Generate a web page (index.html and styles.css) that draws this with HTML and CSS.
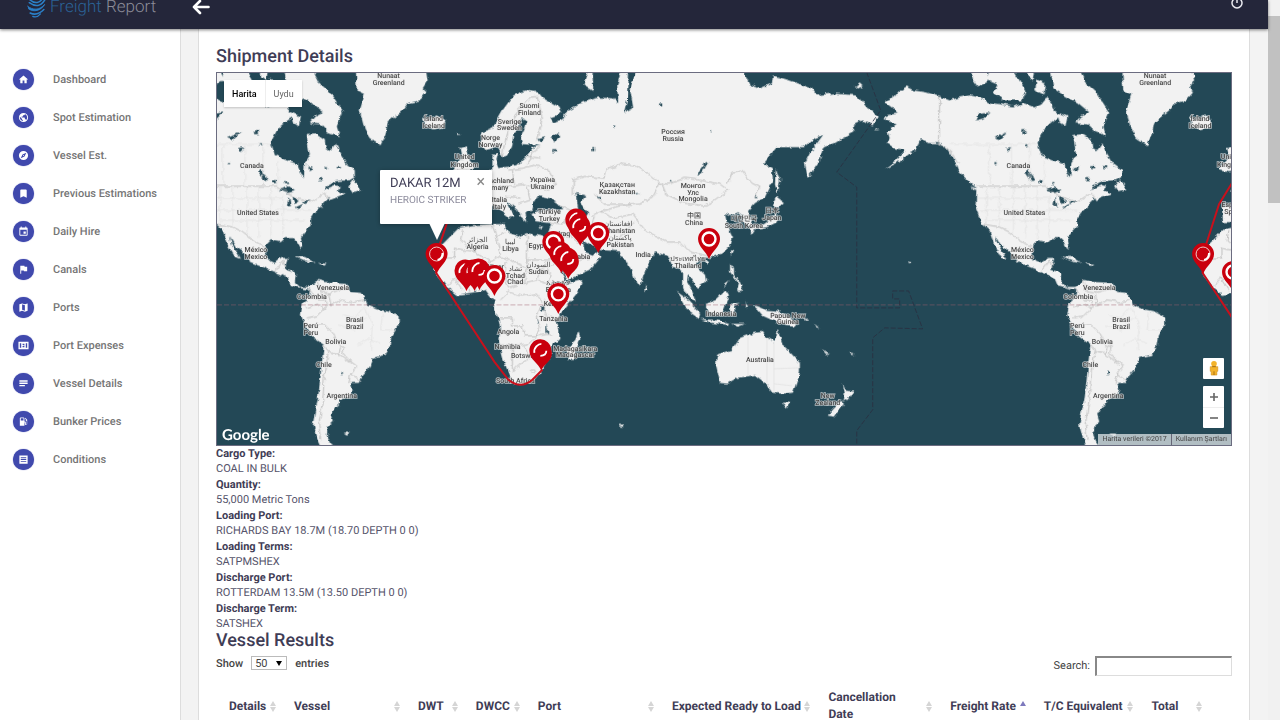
FILE: index.html
```html
<!DOCTYPE html>
<html lang="en">
<head>
<meta charset="utf-8">
<meta name="viewport" content="width=device-width, initial-scale=1">
<title>Freight Report</title>
<link rel="stylesheet" href="styles.css">
</head>
<body>
<div class="app">
<div class="page">
<header class="topbar">
  <a class="brand" href="#">
    <svg class="brand-mark" viewBox="0 0 24 28" fill="none" stroke="#2b80c8" stroke-linecap="round"><path d="M3 5Q13 14 20 2M3 9Q14 17 21 6" stroke-width="1.800"/><path d="M1 13C7 18 15 18 21 11C17 18 8 21 2 16" stroke-width="1" fill="#2b80c8"/><path d="M4 21Q12 25 20 17" stroke-width="1.800"/><path d="M7 25Q12 27 16 22" stroke-width="1.400"/></svg>
    <span><span class="brand-a">Freight</span> <span class="brand-b">Report</span></span>
  </a>
  <button class="icon-btn back" aria-label="Back"><svg viewBox="0 0 18 16" fill="none" stroke="#fff" stroke-width="2.600" stroke-linecap="round" stroke-linejoin="round"><path d="M16.500 8H2M8 2L2 8l6 6"/></svg></button>
  <button class="icon-btn power" aria-label="Log out"><svg viewBox="0 0 14 14" fill="none" stroke="#e8e8ee" stroke-width="1.500"><path d="M7 1v6M4 3a5 5 0 1 0 6 0"/></svg></button>
</header>
<div class="body">
<nav class="side">
  <a href="#"><i><svg viewBox="0 0 24 24"><path d="M10 20v-6h4v6h5v-8h3L12 3 2 12h3v8z"/></svg></i>Dashboard</a>
  <a href="#"><i><svg viewBox="0 0 24 24"><path d="M12 2a10 10 0 1 0 0 20 10 10 0 0 0 0-20zm-1 17.900A8 8 0 0 1 4.200 10.200L9 15v1a2 2 0 0 0 2 2zm6.900-2.500A2 2 0 0 0 16 16h-1v-3a1 1 0 0 0-1-1H8v-2h2a1 1 0 0 0 1-1V7h2a2 2 0 0 0 2-2v-.4a8 8 0 0 1 2.900 12.800z"/></svg></i>Spot Estimation</a>
  <a href="#"><i><svg viewBox="0 0 24 24"><path fill-rule="evenodd" d="M12 2a10 10 0 1 0 0 20 10 10 0 0 0 0-20zm2.200 12.200L6 18l3.800-8.200L18 6zM12 10.900a1.100 1.100 0 1 0 0 2.200 1.100 1.100 0 0 0 0-2.200z"/></svg></i>Vessel Est.</a>
  <a href="#"><i><svg viewBox="0 0 24 24"><path d="M17 3H7a2 2 0 0 0-2 2v16l7-3 7 3V5a2 2 0 0 0-2-2z"/></svg></i>Previous Estimations</a>
  <a href="#"><i><svg viewBox="0 0 24 24"><path fill-rule="evenodd" d="M17 12h-5v5h5zM16 1v2H8V1H6v2H5a2 2 0 0 0-2 2v14a2 2 0 0 0 2 2h14a2 2 0 0 0 2-2V5a2 2 0 0 0-2-2h-1V1zm3 18H5V8h14z"/></svg></i>Daily Hire</a>
  <a href="#"><i><svg viewBox="0 0 24 24"><path d="M14.400 6L14 4H5v17h2v-7h5.600l.4 2h7V6z"/></svg></i>Canals</a>
  <a href="#"><i><svg viewBox="0 0 24 24"><path fill-rule="evenodd" d="M20.500 3L15 5 9 3 3 5v16l6-2 6 2 6-2V3zM15 19l-6-2V5l6 2z"/></svg></i>Ports</a>
  <a href="#"><i><svg viewBox="0 0 24 24"><path fill-rule="evenodd" d="M1 4h22v16H1zM4 7v10h3V7zM17 7v10h3V7zM10 8v3h2v2h-2v3h4v-4h-2v-1h2V8z"/></svg></i>Port Expenses</a>
  <a href="#"><i><svg viewBox="0 0 24 24"><path d="M3 5h18v3H3zM3 10h18v3H3zM3 15h12v3H3z"/></svg></i>Vessel Details</a>
  <a href="#"><i><svg viewBox="0 0 24 24"><path fill-rule="evenodd" d="M4 5a2 2 0 0 1 2-2h6a2 2 0 0 1 2 2v7h1a2 2 0 0 1 2 2v4a1 1 0 0 0 2 0v-7a3 3 0 0 1-2-4L15 5l1-1 4 4v10a3 3 0 0 1-5 0v-4h-1v7H4zM6 5v5h6V5z"/></svg></i>Bunker Prices</a>
  <a href="#"><i><svg viewBox="0 0 24 24"><path fill-rule="evenodd" d="M3 3h18v18H3zM6 7v2h12V7zM6 11v2h12v-2zM6 15v2h12v-2z"/></svg></i>Conditions</a>
</nav>
<main class="card">
  <h1>Shipment Details</h1>
  <div class="map">
    <svg class="world" viewBox="216 72 1016 374" preserveAspectRatio="xMidYMid slice" role="img" aria-label="World map">
      <defs>
        <filter id="coast" x="0" y="0" width="100%" height="100%"><feTurbulence type="fractalNoise" baseFrequency="0.16" numOctaves="3" seed="4"/><feDisplacementMap in="SourceGraphic" scale="5" xChannelSelector="R" yChannelSelector="G"/></filter>
        <g id="americas">
          <path class="land" d="M885 101L895 96 899 91 907 86 915 90 927 92 940 96 950 100 960 97 970 95 983 98 990 102 1013 106 1025 103 1035 107 1041 104 1047 97 1053 102 1055 110 1062 115 1052 122 1045 128 1038 142 1042 155 1053 160 1065 164 1067 173 1071 177 1072 163 1077 155 1075 143 1074 135 1083 134 1092 140 1093 148 1098 150 1103 143 1107 153 1113 163 1122 170 1122 177 1117 180 1103 181 1093 187 1091 190 1102 185 1107 186 1105 190 1112 194 1102 198 1097 200 1096 197 1090 203 1087 208 1082 212 1078 218 1078 225 1072 232 1068 237 1070 247 1068 249 1064 242 1060 238 1052 238 1048 242 1038 240 1033 245 1032 257 1035 260 1042 263 1048 258 1055 258 1053 265 1052 270 1063 273 1062 282 1067 287 1076 287 1085 280 1092 282 1113 283 1118 292 1128 293 1133 300 1135 306 1143 309 1157 312 1166 317 1166 325 1159 335 1157 347 1152 355 1140 358 1137 367 1130 375 1126 383 1118 383 1120 390 1117 397 1107 400 1106 405 1102 408 1098 415 1100 422 1095 427 1094 435 1097 443 1101 448 1088 448 1083 437 1080 425 1082 413 1085 400 1087 383 1089 363 1091 345 1080 337 1072 325 1068 315 1070 303 1076 298 1077 290 1070 289 1058 285 1055 278 1042 272 1030 267 1017 262 1015 255 1003 247 997 236 999 245 1007 259 1002 257 995 245 990 230 982 223 976 207 977 188 970 182 960 172 955 160 947 148 940 143 930 143 920 140 917 148 908 155 897 163 885 169 897 160 905 150 895 148 887 143 890 138 888 132 897 123 885 120 887 115 898 113 893 107Z"/>
          <path class="land" d="M972 66L988 68 990 80 978 86 972 78ZM992 66L1012 66 1020 80 1026 90 1022 100 1004 100 994 92 998 84 988 80ZM1028 66L1036 66 1033 80 1028 76ZM1037 78L1046 82 1044 94 1036 90ZM1051 66L1080 70 1086 82 1097 92 1110 112 1104 126 1107 136 1096 132 1088 124 1076 123 1082 116 1090 112 1078 102 1066 96 1054 88ZM1058 112L1068 116 1066 126 1060 122ZM1116 186L1121 179 1128 190 1120 192ZM1062 257L1072 257 1082 263 1074 262ZM1085 263L1094 264 1091 266ZM972 186L979 190 975 191ZM1110 433L1117 433 1114 436Z"/>
          <path class="land" d="M1123 66L1124 90 1132 94 1127 110 1132 130 1137 138 1148 145 1153 133 1155 122 1170 110 1175 103 1187 100 1194 92 1190 88 1195 80 1193 66ZM1190 117L1196 120 1205 115 1213 120 1211 127 1200 129 1193 125Z"/>
          <path class="lake" d="M1047 190L1055 186 1062 191 1054 193ZM1056 196L1058 206 1054 206ZM1060 196L1067 201 1062 204 1060 199ZM1063 207L1072 203 1065 209ZM1070 202L1079 200 1072 204ZM1028 169L1035 180 1032 181 1026 172ZM978 114L990 112 984 118 976 120ZM994 138L1008 132 1000 140ZM1006 148L1012 147 1008 151ZM1074 168L1080 167 1077 171ZM1022 130h4v4h-4zM1026 144h3v2h-3zM1086 178h4v2h-4zM1092 166h3v3h-3zM1104 166h4v2h-4zM1040 180h3v3h-3zM1052 182h3v2h-3zM995 162h2v2h-2zM1108 372h2v3h-2zM1119 76h1v1h-1z"/>
          <path class="border" d="M977 186H1045L1060 196 1078 202 1092 193 1096 198M940 96V144L950 150 960 164M984 224L1000 227 1010 232 1020 240 1033 248M1042 271L1050 260 1053 268M1077 290L1084 300 1092 300 1094 306 1084 316 1074 318M1084 280L1088 292 1096 293 1104 291 1113 288M1096 293L1098 306 1108 300 1120 302 1132 300M1074 308L1084 304 1092 308M1085 325L1092 325 1100 333 1106 345 1112 347 1110 353 1116 360 1124 366 1118 374 1116 384M1091 345L1096 352 1092 370 1090 400 1086 425 1088 440M1096 352L1106 354 1108 347M1106 354L1118 363M1118 374L1128 381"/>
          <path class="state" d="M987 186V223M1000 186V226M1014 186V234M1026 186V238M1038 187V238M1050 196V237M977 198H1050M980 210H1078M988 220H1072M1012 186V145M990 184V145M1030 186V142M1045 185V160M950 144H1038M1110 315L1122 318 1130 308M1106 326L1122 330 1134 318M1124 345L1136 338 1148 344M1132 306L1140 326 1138 350M1150 312L1148 330 1162 330"/>
        </g>
        <g id="oldworld">
          <path class="land" d="M485 150L480 142 482 132 492 128 502 110 513 95 525 90 538 92 542 97 558 106 561 113 550 117 553 122 562 119 567 110 580 103 598 97 613 98 618 103 617 85 622 66 628 66 627 100 624 112 633 107 630 90 637 66 742 66 750 85 760 88 772 83 773 75 790 80 812 88 817 95 833 93 857 95 867 107 878 115 873 125 863 120 853 125 855 132 843 138 835 143 823 148 820 160 813 170 808 178 805 163 810 153 823 135 815 138 803 147 777 147 763 163 772 168 773 180 765 197 755 203 748 211 752 220 750 227 743 223 742 215 738 212 730 215 725 213 728 227 733 237 730 247 723 253 710 258 701 258 695 265 705 275 706 282 698 288 688 275 687 282 692 291 696 302 688 297 683 287 683 273 678 268 672 267 668 256 655 252 647 265 643 277 640 287 633 277 627 260 620 257 618 251 600 250 588 244 582 240 585 252 594 255 598 251 600 258 590 270 567 280 565 277 557 263 550 252 546 238 551 223 542 222 535 221 531 214 537 211 550 210 563 210 557 203 550 198 538 195 533 203 532 210 525 213 527 223 520 217 517 210 505 200 509 207 514 215 509 217 500 210 495 206 485 205 474 212 470 222 456 222 455 207 467 205 468 196 462 190 480 180 492 168 492 155 497 152 495 160 498 168 517 165 525 157 533 147 540 145 522 144 520 138 525 127 527 120 522 118 518 127 513 132 512 144 508 155 502 157 498 147 493 148Z"/>
          <path class="land" d="M458 228L472 225 490 224 504 224 507 232 520 237 527 233 545 237 549 247 555 262 564 278 567 284 582 280 577 293 563 310 556 320 559 330 559 338 552 345 552 353 542 370 532 382 513 385 508 373 503 360 498 340 500 330 498 318 493 308 495 300 490 297 485 290 477 292 456 295 446 287 439 278 434 272 433 260 439 247 449 237ZM578 332L580 338 573 360 568 360 567 348 575 340ZM456 164L462 158 460 148 466 146 469 160 474 166 472 170 462 172 452 170ZM589 66L583 84 593 90 592 66ZM645 284L648 290 644 292ZM508 217L510 217 508 220ZM538 227L543 226 540 229Z"/>
          <path class="sea" d="M575 193L585 195 581 203 588 213 583 220 578 212 577 203ZM569 216h2v2h-2zM696 176L706 162 708 162 702 173ZM541 306L544 306 544 310 541 311ZM536 318L538 322 537 324ZM546 324L548 333 546 333ZM550 138L558 132 560 136 554 141ZM538 138L545 136 541 142ZM597 196h4v2h-4zM632 193L640 193 632 195ZM592 148h2v3h-2zM553 149h3v3h-3zM613 125h1v2h-1zM660 103h2v3h-2zM710 130h1v3h-1zM670 180h2v2h-2zM755 196h2v2h-2z"/>
          <path class="border" d="M502 156L503 148 508 130 516 112 530 97 538 96M537 97L542 118 536 140M573 195L573 180 585 176 603 178 606 170 622 163 635 165 650 175 660 183 668 184 685 178 700 180 720 184M662 184L666 194 684 203 706 206 728 190 720 184M728 184L732 172 742 170 752 183 760 187 755 198M660 183L652 198 640 203 626 204 604 204 594 194M600 212L618 206 632 205M590 216L600 212 614 218 632 214 640 224M612 250L620 238 634 222M640 224L646 232 666 242 680 242 690 252 708 256M560 206L575 212M563 222L574 226 580 238M550 222L562 224 570 212M552 234L568 236 582 244M560 268L572 262 590 258M528 185L545 190 556 184M507 170L522 168 534 165 548 170 556 184M498 186L512 186 526 184 530 200 518 204M505 196L520 198M512 170L514 184M526 156L540 158M527 164L532 152 540 146M594 216L590 232 602 250"/>
          <path class="border" d="M462 230L460 240 474 252 490 262 500 256 496 236 492 226M440 258H454V248L474 252M496 236L504 232M527 234V260H560M500 256L527 268V260M458 274L470 270 490 262M478 290L480 274 490 276 504 274 506 262M504 274L508 288 520 284 536 280 548 284M527 268L524 284M545 262L550 274 546 290 556 300 562 308M544 300L544 315 556 320M500 300L508 292 520 296 536 294 542 302M500 318H512V326H522L524 336H536L540 326 536 318 540 306M499 345H520L528 344 536 336 552 334M512 345V372L520 364 530 358 540 354M524 346L530 358M540 350L546 340M446 286L454 278 462 290M468 292V276M474 292V276M536 280L542 268 554 264"/>
          <circle class="border" cx="533" cy="371" r="2"/>
        </g>
        <g id="pin"><path fill="#c9000d" d="M0 0C-3-8-11-12-11-20a11 11 0 0 1 22 0C11-12 3-8 0 0Z"/><circle cy="-20" r="6.500" fill="none" stroke="#fff" stroke-width="2.400"/></g>
        <g id="dakar"><path fill="#c9000d" d="M0 0C-3-8-11-12-11-20a11 11 0 0 1 22 0C11-12 3-8 0 0Z"/><circle cy="-20" r="7" fill="none" stroke="#f0c8c8" stroke-width="1"/><path fill="none" stroke="#fff" stroke-width="2" d="M6-21Q6-15 1-14"/></g>
        <g id="stack"><path fill="#c9000d" d="M0 0C-3-8-12-11-12-20a11 11 0 0 1 22-1C13-10 3-8 0 0Z"/><path fill="none" stroke="#fff" stroke-width="1.800" d="M-7-18C-8-23-3-27 0-27M-1-15Q5-15 5-20"/></g>
      </defs>
      <path class="sea" d="M216 72h1016v374H216z"/>
      <g filter="url(#coast)">
        <use href="#americas" x="-768"/><use href="#americas"/>
        <use href="#oldworld"/><use href="#oldworld" x="768"/>
        <path class="land" d="M762 331L765 336 767 338 774 342 778 330 783 345 788 350 800 363 800 373 793 393 782 394 772 393 765 383 755 375 737 378 727 384 720 383 716 365 717 355 732 350 740 338 748 335 755 332ZM782 402L790 402 787 409ZM843 384L847 391 854 392 848 400 844 402 845 393ZM842 400L844 404 835 417 828 416 832 410ZM753 305L761 308 767 311 780 312 790 317 797 326 786 325 774 321 763 316 758 310ZM725 290L729 296 725 306 722 314 712 314 706 309 706 303 716 299ZM730 304L741 303 734 306 735 316 731 314ZM677 292L687 299 700 313 699 319 688 311ZM700 319L714 320 729 323 728 325 712 323ZM731 324L745 324 738 327ZM730 265L734 268 734 275 741 284 742 291 737 291 739 284 733 276 730 272ZM724 285L730 280 725 287ZM776 196L784 202 778 208 773 206ZM776 212L777 222 767 227 755 229 751 235 751 227 764 224 772 218ZM776 168L780 180 778 194 775 184ZM731 250L734 250 731 256ZM705 261L710 261 707 265ZM855 87L860 83 863 86 858 88ZM875 128L880 130 876 130ZM822 349L829 354 826 354ZM746 301L748 307 746 308ZM805 318L810 321 806 321ZM815 324L819 328 817 328ZM908 262h3v2h-3zM851 353h3v2h-3zM619 425h5v2h-5zM457 134h2v2h-2z"/>
      </g>
      <path class="state" d="M748 337V376M767 338V384M774 343V392M774 369L800 368M774 384L792 386"/>
      <path class="dash" d="M216 305H1232"/>
      <path class="dateline" d="M867 72L881 110 837 172 857 187V308H900V299H893V291H909L923 329 885 328 873 338V410L857 431V446"/>
      <g class="labels">
        <text x="388" y="78">Nunaat</text><text x="388" y="85">Greenland</text><text x="433" y="121">Ísland</text><text x="433" y="128">Iceland</text>
        <text x="251" y="168">Canada</text><text x="257" y="215">United States</text><text x="255" y="252">México</text><text x="255" y="259">Mexico</text>
        <text x="332" y="290">Venezuela</text><text x="311" y="299">Colombia</text><text x="354" y="322">Brasil</text><text x="354" y="329">Brazil</text><text x="310" y="328">Perú</text><text x="310" y="335">Peru</text><text x="335" y="344">Bolivia</text><text x="323" y="367">Chile</text><text x="341" y="398">Argentina</text>
        <text x="1156" y="78">Nunaat</text><text x="1156" y="85">Greenland</text><text x="1201" y="121">Ísland</text><text x="1201" y="128">Iceland</text>
        <text x="1019" y="168">Canada</text><text x="1025" y="215">United States</text><text x="1023" y="252">México</text><text x="1023" y="259">Mexico</text>
        <text x="1100" y="290">Venezuela</text><text x="1079" y="299">Colombia</text><text x="1122" y="322">Brasil</text><text x="1122" y="329">Brazil</text><text x="1078" y="328">Perú</text><text x="1078" y="335">Peru</text><text x="1103" y="344">Bolivia</text><text x="1091" y="367">Chile</text><text x="1109" y="398">Argentina</text>
        <text x="464" y="159">United</text><text x="464" y="167">Kingdom</text><text x="1232" y="159">United</text><text x="1232" y="167">Kingdom</text><text x="1234" y="207">España</text><text x="1234" y="214">Spain</text>
        <text x="529" y="108">Suomi</text><text x="529" y="115">Finland</text><text x="509" y="124">Sverige</text><text x="509" y="130">Sweden</text><text x="490" y="140">Norge</text><text x="490" y="147">Norway</text>
        <text x="494" y="183">Deutschland</text><text x="494" y="190">Germany</text><text x="499" y="202">Italia</text><text x="499" y="209">Italy</text><text x="542" y="182">Україна</text><text x="542" y="189">Ukraine</text><text x="549" y="214">Türkiye</text><text x="549" y="221">Turkey</text>
        <text x="617" y="187">Қазақстан</text><text x="617" y="194">Kazakhstan</text><text x="673" y="134">Россия</text><text x="673" y="141">Russia</text><text x="693" y="188">Монгол</text><text x="693" y="195">Улс</text><text x="693" y="201">Mongolia</text><text x="694" y="218">中国</text><text x="694" y="225">China</text>
        <text x="772" y="213">日本</text><text x="772" y="220">Japan</text><text x="744" y="221">대한민국</text><text x="744" y="228">South Korea</text>
        <text x="477" y="242">الجزائر</text><text x="477" y="249">Algeria</text><text x="510" y="244">ليبيا</text><text x="510" y="251">Libya</text><text x="537" y="248">Egypt</text><text x="564" y="236">Iraq</text><text x="580" y="259">Arabia</text>
        <text x="618" y="226">افغانستان</text><text x="616" y="233">Afghanistan</text><text x="620" y="240">پاکستان</text><text x="620" y="247">Pakistan</text><text x="643" y="257">India</text><text x="688" y="261">ประเทศไทย</text><text x="688" y="268">Thailand</text>
        <text x="515" y="271">تشاد</text><text x="515" y="278">Tchad</text><text x="515" y="284">Chad</text><text x="538" y="267">السودان</text><text x="538" y="274">Sudan</text><text x="495" y="269">Niger</text><text x="558" y="285">ኢትዮጵያ</text><text x="558" y="292">Ethiopia</text><text x="553" y="306">Kenya</text><text x="553" y="321">Tanzania</text><text x="508" y="334">Angola</text><text x="507" y="349">Namibia</text><text x="526" y="358">Botswana</text><text x="515" y="383">South Africa</text><text x="575" y="351">Madagasikara</text><text x="575" y="357">Madagascar</text>
        <text x="721" y="316">Indonesia</text><text x="788" y="318">Papua New</text><text x="788" y="324">Guinea</text><text x="760" y="362">Australia</text><text x="828" y="398">New</text><text x="828" y="405">Zealand</text>
      </g>
      <g class="route"><path d="M436 254L448 218M435 272L494 362 508 380Q520 390 532 380L542 370M1204 254L1220 204 1236 178M1203 272L1236 322"/></g>
      <use href="#stack" x="466" y="291"/><use href="#stack" x="474" y="291"/><use href="#stack" x="479" y="290"/><use href="#pin" x="494" y="296"/>
      <use href="#stack" x="577" y="240"/><use href="#stack" x="580" y="246"/><use href="#pin" x="598" y="253"/><use href="#pin" x="553" y="262"/><use href="#stack" x="561" y="273"/><use href="#stack" x="568" y="279"/>
      <use href="#pin" x="558" y="314"/><use href="#stack" x="541" y="371"/><use href="#pin" x="709" y="259"/>
      <use href="#dakar" x="436" y="274"/><use href="#dakar" x="1204" y="274"/><use href="#pin" x="1234" y="292"/>
    </svg>
    <div class="map-type"><button class="on">Harita</button><button>Uydu</button></div>
    <div class="info"><button aria-label="Close">×</button><strong>DAKAR 12M</strong><span>HEROIC STRIKER</span></div>
    <span class="google">Google</span>
    <div class="controls">
      <button class="man" aria-label="Street View"><svg viewBox="0 0 10 16"><circle cx="5" cy="3" r="3" fill="#f3b32b"/><path fill="#f3b32b" stroke="#cf8b15" stroke-width=".6" d="M1 6h8v5H8v4H2v-4H1z"/><path stroke="#a66c10" d="M5 11v4M3 6h4"/></svg></button>
      <div class="zoom"><button aria-label="Zoom in"><svg viewBox="0 0 8 8"><path d="M4 0v8M0 4h8"/></svg></button><button aria-label="Zoom out"><svg viewBox="0 0 8 8"><path d="M0 4h8"/></svg></button></div>
    </div>
    <div class="legal"><span>Harita verileri ©2017</span><a href="#">Kullanım Şartları</a></div>
  </div>
  <dl class="facts">
    <dt>Cargo Type:</dt><dd>COAL IN BULK</dd>
    <dt>Quantity:</dt><dd>55,000 Metric Tons</dd>
    <dt>Loading Port:</dt><dd>RICHARDS BAY 18.7M (18.70 DEPTH 0 0)</dd>
    <dt>Loading Terms:</dt><dd>SATPMSHEX</dd>
    <dt>Discharge Port:</dt><dd>ROTTERDAM 13.5M (13.50 DEPTH 0 0)</dd>
    <dt>Discharge Term:</dt><dd>SATSHEX</dd>
  </dl>
  <h2>Vessel Results</h2>
  <div class="tools">
    <label class="length">Show <select><option>50</option></select> entries</label>
    <label class="search">Search: <input type="search"></label>
  </div>
  <table>
    <colgroup><col class="c1"><col class="c2"><col class="c3"><col class="c4"><col class="c5"><col class="c6"><col class="c7"><col class="c8"><col class="c9"><col class="c10"><col></colgroup>
    <thead><tr><th>Details</th><th>Vessel</th><th>DWT</th><th>DWCC</th><th>Port</th><th>Expected Ready to Load</th><th class="wrap">Cancellation Date</th><th class="asc">Freight Rate</th><th>T/C Equivalent</th><th>Total</th><td></td></tr></thead>
  </table>
</main>
</div>
</div>
<div class="scroll"><div class="thumb"></div></div>
</div>
</body>
</html>
```
FILE: styles.css
```css
* { box-sizing: border-box; }
body { margin: 0; font-family: Roboto, "Noto Sans", "Noto Sans CJK SC", "Noto Sans CJK KR", sans-serif; color: #3f3d56; background: #f3f3f3; text-rendering: geometricPrecision; }
button { padding: 0; border: 0; background: none; font: inherit; color: inherit; cursor: pointer; }
a { color: inherit; text-decoration: none; }
.app { display: flex; height: 100vh; overflow: hidden; }
.page { flex: 1; min-width: 0; display: flex; flex-direction: column; }
.topbar { flex: none; display: flex; align-items: center; height: 29px; padding: 0 24px 15px 26px; background: #24263a; box-shadow: 0 1px 3px rgba(0,0,0,.5); z-index: 1; }
.brand { display: flex; align-items: center; gap: 2px; width: 166px; font-size: 17px; font-weight: 300; white-space: nowrap; }
.brand-mark { width: 22px; height: 24px; }
.brand-a { color: #2b6296; }
.brand-b { color: #8b8c98; }
.icon-btn svg { display: block; }
.back svg { width: 18px; height: 16px; }
.power { margin-left: auto; }
.power svg { width: 14px; height: 14px; margin-bottom: 8px; }
.body { flex: 1; min-height: 0; display: flex; }
.side { flex: none; width: 181px; padding-top: 31px; background: #fff; border-right: 1px solid #ddd; }
.side a { display: flex; align-items: center; gap: 19px; height: 38px; padding-left: 13px; color: #757575; font-size: 11px; font-weight: 500; }
.side i { display: grid; place-items: center; width: 21px; height: 21px; border-radius: 50%; background: #4049ad; box-shadow: 0 0 1px #4049ad; }
.side svg { width: 11px; height: 11px; fill: #fff; }
.card { flex: 1; min-width: 0; margin: 0 18px 0 17px; padding: 16px 17px 0; background: #fff; border: 1px solid #ddd; border-width: 0 1px; overflow: hidden; }
h1, h2 { margin: 0; font-size: 18px; font-weight: 500; }
h1 { line-height: 23px; margin-bottom: 4px; }
h2 { line-height: 18px; }
.map { position: relative; height: 374px; border: 1px solid #6b6c80; background: #234856; overflow: hidden; }
.world { display: block; width: 100%; height: 100%; }
.land { fill: #f2f2f2; }
.sea, .lake { fill: #234856; }
.border { fill: none; stroke: #aaa; stroke-width: .7; }
.state { fill: none; stroke: #ddd; stroke-width: .6; }
.dash { stroke: #a06070; stroke-width: .8; stroke-dasharray: 5 2; opacity: .6; }
.dateline { fill: none; stroke: #2b2e40; stroke-width: .8; stroke-dasharray: 5 2; }
.labels { font-size: 7px; font-weight: 500; fill: #484848; stroke: #eee; stroke-opacity: .7; stroke-width: 1.5px; paint-order: stroke; text-anchor: middle; }
.route { fill: none; stroke: #c9101c; stroke-width: 2; }
.map-type { position: absolute; left: 7px; top: 7px; display: flex; height: 27px; background: #fff; box-shadow: 0 1px 2px rgba(0,0,0,.2); font-size: 9px; color: #666; }
.map-type button { padding: 0 8px; }
.map-type .on { font-weight: 500; color: #000; border-right: 1px solid #eee; }
.info { position: absolute; left: 163px; top: 97px; width: 112px; height: 54px; padding: 4px 10px; background: #fff; border-radius: 1px; box-shadow: 0 1px 4px rgba(0,0,0,.3); }
.info::after { content: ""; position: absolute; left: 49px; top: 53px; border: solid transparent; border-width: 17px 8px 0; border-top-color: #fff; }
.info button { position: absolute; right: 7px; top: 4px; font-size: 16px; line-height: 16px; color: #888; }
.info strong { display: block; font-size: 13px; line-height: 19px; font-weight: 400; }
.info span { display: block; font-size: 10px; line-height: 16px; color: #8c8b9c; }
.google { position: absolute; left: 5px; bottom: 1px; color: #fff; font: 700 15px/18px Lato, sans-serif; }
.controls { position: absolute; right: 7px; bottom: 17px; display: grid; gap: 7px; }
.man, .zoom { width: 21px; background: #fff; border-radius: 1px; }
.man { display: grid; place-items: center; height: 21px; }
.man svg { width: 10px; height: 15px; }
.zoom button { display: grid; place-items: center; width: 21px; height: 21px; }
.zoom svg { width: 8px; height: 8px; stroke: #666; stroke-width: 1.6; }
.zoom button + button { border-top: 1px solid #eee; }
.legal { position: absolute; right: 0; bottom: 0; display: flex; height: 11px; font-size: 7px; line-height: 11px; color: #444; background: rgba(225,230,232,.75); }
.legal > * { padding: 0 4px; }
.legal a { border-left: 1px solid #667; }
.facts { margin: 0; font-size: 11px; }
.facts dt { line-height: 15px; font-weight: 700; }
.facts dd { margin: 0; line-height: 16px; color: #55536a; }
.tools { display: flex; justify-content: space-between; font-size: 11px; color: #444; }
.length { display: flex; align-items: center; gap: 8px; height: 26px; font-weight: 500; }
.length select { width: 36px; height: 14px; padding: 0 3px; border: 1px solid #bbb; font: 11px Roboto, sans-serif; color: #444; appearance: none; background: url("data:image/svg+xml,%3Csvg xmlns='http://www.w3.org/2000/svg' viewBox='0 0 6 5'%3E%3Cpath d='M0 0h6L3 5z'/%3E%3C/svg%3E") no-repeat right 4px center / 6px 5px; }
.search { display: flex; align-items: center; gap: 5px; padding-top: 5px; }
.search input { width: 137px; height: 20px; border: 1px solid #ddd; border-top: 2px solid #888; border-left: 2px solid #888; background: #fff; }
table { width: 100%; margin-top: 12px; border-collapse: collapse; table-layout: fixed; }
th { position: relative; padding: 0 0 0 13px; height: 36px; text-align: left; font-size: 12px; line-height: 17px; font-weight: 700; white-space: nowrap; }
td { padding: 0; }
th.wrap { white-space: normal; padding-right: 20px; }
th::before, th::after { content: ""; position: absolute; right: 5px; border: solid transparent; border-width: 0 3px; }
th::before { top: 13px; border-bottom: 5px solid #d5d5d5; }
th::after { top: 19px; border-top: 5px solid #d5d5d5; }
th.asc::before { border-bottom-color: #7d79bd; }
th.asc::after { display: none; }
.c1 { width: 6.4%; } .c2 { width: 12.2%; } .c3 { width: 5.7%; } .c4 { width: 6.1%; } .c5 { width: 13.2%; }
.c6 { width: 15.4%; } .c7 { width: 12%; } .c8 { width: 9.2%; } .c9 { width: 10.6%; } .c10 { width: 6.7%; }
.scroll { flex: none; width: 12px; padding-top: 16px; background: #f1f1f1; }
.thumb { height: 187px; background: #c1c1c1; }
```
